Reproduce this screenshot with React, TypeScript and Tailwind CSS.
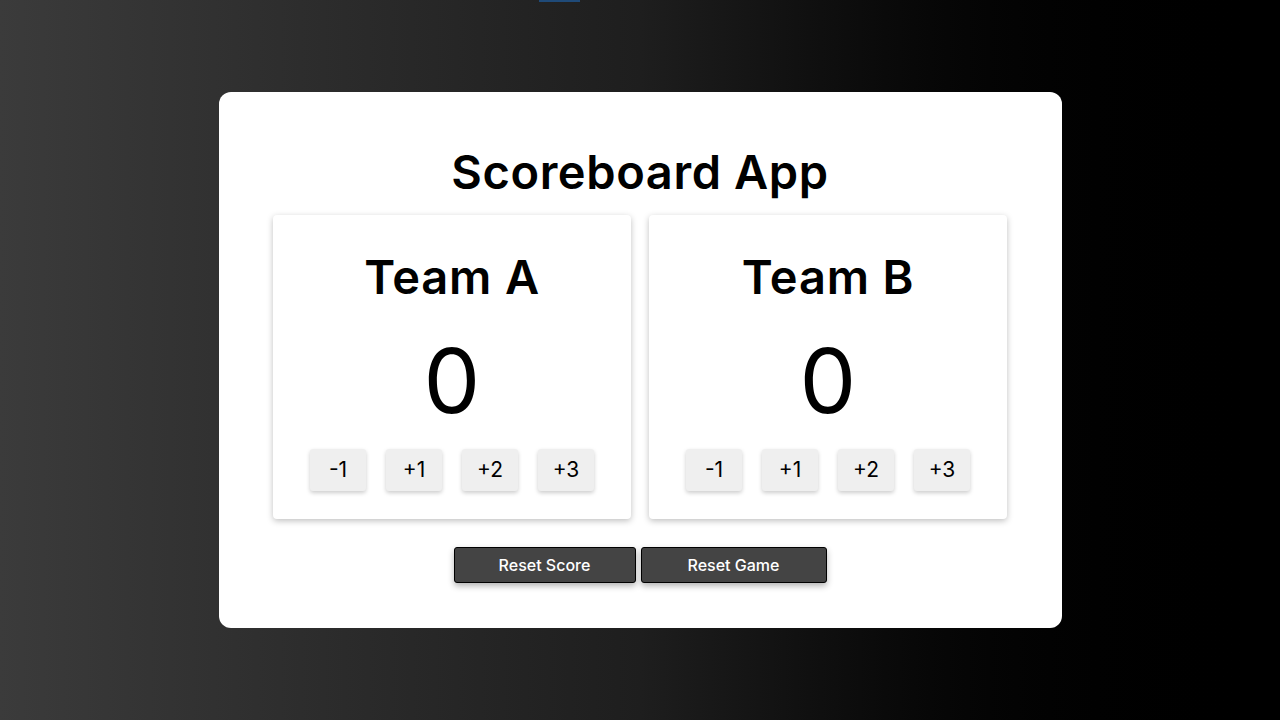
import { useState } from "react";

const font = { fontFamily: '"Inter", "Open Sans", sans-serif' };

function TeamCard({
  name,
  score,
  onAdd,
}: {
  name: string;
  score: number;
  onAdd: (n: number) => void;
}) {
  const steps = [-1, 1, 2, 3];
  return (
    <div className="w-[358px] h-[304px] bg-white rounded-[4px] shadow-[0_2px_6px_rgba(0,0,0,0.25)] flex flex-col items-center pt-[34px]">
      <h2 className="text-[47px] leading-[56px] font-semibold tracking-[0.8px] text-black">
        {name}
      </h2>
      <div className="text-[90px] leading-[96px] font-normal text-black mt-[28px]">
        {score}
      </div>
      <div className="flex gap-[20px] mt-[20px]">
        {steps.map((s) => (
          <button
            key={s}
            onClick={() => onAdd(s)}
            className="w-[56px] h-[42px] bg-[#efefef] rounded-[3px] shadow-[0_2px_4px_rgba(0,0,0,0.2)] text-[21px] text-black"
          >
            {s > 0 ? `+${s}` : `-${Math.abs(s)}`}
          </button>
        ))}
      </div>
    </div>
  );
}

export default function App() {
  const [a, setA] = useState(0);
  const [b, setB] = useState(0);

  const reset = () => {
    setA(0);
    setB(0);
  };

  return (
    <div
      style={font}
      className="relative w-full h-[720px] bg-gradient-to-r from-[#3b3b3b] via-[#1e1e1e] to-black flex justify-center pt-[92px]"
    >
      {/* thin tab highlight at the top edge */}
      <div className="absolute left-[539px] top-0 w-[41px] h-[2px] bg-[#1f4a78]" />

      <div className="w-[843px] h-[536px] bg-white rounded-[12px] flex flex-col items-center pt-[52px]">
        <h1 className="text-[47px] leading-[56px] font-semibold text-black tracking-[0.6px]">
          Scoreboard App
        </h1>
        <div className="flex gap-[18px] mt-[15px]">
          <TeamCard
            name="Team A"
            score={a}
            onAdd={(n) => setA((v) => Math.max(0, v + n))}
          />
          <TeamCard
            name="Team B"
            score={b}
            onAdd={(n) => setB((v) => Math.max(0, v + n))}
          />
        </div>
        <div className="flex gap-[5px] mt-[28px]">
          <button
            onClick={reset}
            className="w-[182px] h-[36px] bg-[#444444] border border-black rounded-[3px] shadow-[0_3px_6px_rgba(0,0,0,0.3)] text-white text-[16px] font-medium"
          >
            Reset Score
          </button>
          <button
            onClick={reset}
            className="w-[186px] h-[36px] bg-[#444444] border border-black rounded-[3px] shadow-[0_3px_6px_rgba(0,0,0,0.3)] text-white text-[16px] font-medium"
          >
            Reset Game
          </button>
        </div>
      </div>
    </div>
  );
}
